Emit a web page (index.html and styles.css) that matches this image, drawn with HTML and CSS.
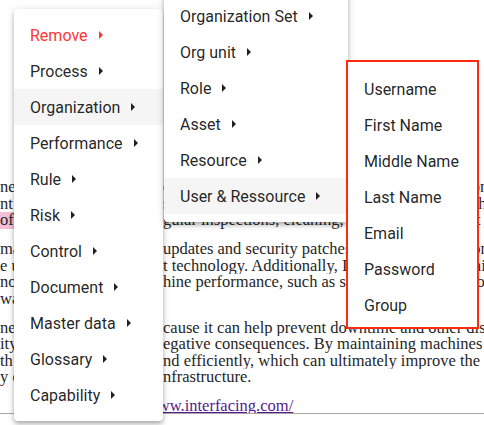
FILE: index.html
```html
<!DOCTYPE html>
<html lang="en">
<head>
<meta charset="utf-8">
<title>Context menu</title>
<link rel="stylesheet" href="styles.css">
</head>
<body>
<div class="page">
  <div class="doc">
    <p class="para">
      <span class="ln"><span class="l">ne</span><span class="r">ed to be maintained regularly in order to function properly and to avoid any failure that ma</span></span>
      <span class="ln"><span class="l">nt :</span><span class="r">ssential, and it involves a number of tasks that should be carried out periodically and</span></span>
      <span class="ln"><span class="l"><span class="mark">of</span></span><span class="r">gular inspections, cleaning, and the replacement of worn parts and components to o</span></span>
    </p>
    <p class="para">
      <span class="ln"><span class="l">may</span><span class="r">updates and security patches are installed as soon as they are released by vendor y</span></span>
      <span class="ln"><span class="l">e u</span><span class="r">t technology. Additionally, IT teams should monitor the systems and verify r</span></span>
      <span class="ln"><span class="l">no</span><span class="r">hine performance, such as slow response times or errors, to detect any problems</span></span>
      <span class="ln"><span class="l">wa</span><span class="r"></span></span>
    </p>
    <p class="para">
      <span class="ln"><span class="l">ne</span><span class="r">cause it can help prevent downtime and other disruptions</span></span>
      <span class="ln"><span class="l">ity</span><span class="r">egative consequences. By maintaining machines regularly</span></span>
      <span class="ln"><span class="l">th</span><span class="r">nd efficiently, which can ultimately improve the overall</span></span>
      <span class="ln"><span class="l">y c</span><span class="r">nfrastructure.</span></span>
    </p>
    <p class="para">
      <span class="ln"><span class="l"></span><span class="r r-open"><a class="link" href="#">https://www.interfacing.com/</a></span></span>
    </p>
  </div>

  <div class="menu menu-main">
    <div class="item item-danger">Remove<svg class="arr" width="4" height="8" viewBox="0 0 4 8"><path d="M0 0L4 4L0 8Z"/></svg></div>
    <div class="item">Process<svg class="arr" width="4" height="8" viewBox="0 0 4 8"><path d="M0 0L4 4L0 8Z"/></svg></div>
    <div class="item item-active">Organization<svg class="arr" width="4" height="8" viewBox="0 0 4 8"><path d="M0 0L4 4L0 8Z"/></svg></div>
    <div class="item">Performance<svg class="arr" width="4" height="8" viewBox="0 0 4 8"><path d="M0 0L4 4L0 8Z"/></svg></div>
    <div class="item">Rule<svg class="arr" width="4" height="8" viewBox="0 0 4 8"><path d="M0 0L4 4L0 8Z"/></svg></div>
    <div class="item">Risk<svg class="arr" width="4" height="8" viewBox="0 0 4 8"><path d="M0 0L4 4L0 8Z"/></svg></div>
    <div class="item">Control<svg class="arr" width="4" height="8" viewBox="0 0 4 8"><path d="M0 0L4 4L0 8Z"/></svg></div>
    <div class="item">Document<svg class="arr" width="4" height="8" viewBox="0 0 4 8"><path d="M0 0L4 4L0 8Z"/></svg></div>
    <div class="item">Master data<svg class="arr" width="4" height="8" viewBox="0 0 4 8"><path d="M0 0L4 4L0 8Z"/></svg></div>
    <div class="item">Glossary<svg class="arr" width="4" height="8" viewBox="0 0 4 8"><path d="M0 0L4 4L0 8Z"/></svg></div>
    <div class="item">Capability<svg class="arr" width="4" height="8" viewBox="0 0 4 8"><path d="M0 0L4 4L0 8Z"/></svg></div>
  </div>

  <div class="menu menu-sub">
    <div class="item">Organization Set<svg class="arr" width="4" height="8" viewBox="0 0 4 8"><path d="M0 0L4 4L0 8Z"/></svg></div>
    <div class="item">Org unit<svg class="arr" width="4" height="8" viewBox="0 0 4 8"><path d="M0 0L4 4L0 8Z"/></svg></div>
    <div class="item">Role<svg class="arr" width="4" height="8" viewBox="0 0 4 8"><path d="M0 0L4 4L0 8Z"/></svg></div>
    <div class="item">Asset<svg class="arr" width="4" height="8" viewBox="0 0 4 8"><path d="M0 0L4 4L0 8Z"/></svg></div>
    <div class="item">Resource<svg class="arr" width="4" height="8" viewBox="0 0 4 8"><path d="M0 0L4 4L0 8Z"/></svg></div>
    <div class="item item-active">User &amp; Ressource<svg class="arr" width="4" height="8" viewBox="0 0 4 8"><path d="M0 0L4 4L0 8Z"/></svg></div>
  </div>

  <div class="menu-fields">
    <div class="item">Username</div>
    <div class="item">First Name</div>
    <div class="item">Middle Name</div>
    <div class="item">Last Name</div>
    <div class="item">Email</div>
    <div class="item">Password</div>
    <div class="item">Group</div>
  </div>
</div>
</body>
</html>
```

FILE: styles.css
```css
html, body {
  margin: 0;
  padding: 0;
  background: #ffffff;
}

.page {
  position: relative;
  width: 484px;
  height: 425px;
  overflow: hidden;
  background: #ffffff;
}

/* background document */
.doc {
  height: 234px;
  padding-top: 179px;
  border-bottom: 1px solid #a8a8a8;
  overflow: hidden;
  font-family: "Liberation Serif", "Times New Roman", serif;
  font-size: 16.5px;
  line-height: 16.5px;
  color: #262626;
}

.para {
  margin: 0 0 12.5px 0;
}

.ln {
  display: grid;
  grid-template-columns: 163px minmax(0, 1fr);
  white-space: nowrap;
}

.l, .r {
  overflow: hidden;
}

.r-open {
  overflow: visible;
}

.mark {
  background: #f2c0d8;
}

.link {
  color: #551a8b;
  margin-left: -63px;
}

/* menus */
.menu {
  position: absolute;
  background: #ffffff;
  border-radius: 4px;
  padding: 8px 0;
  box-shadow: 0 2px 4px -1px rgba(0, 0, 0, 0.2),
              0 4px 5px 0 rgba(0, 0, 0, 0.14),
              0 1px 10px 0 rgba(0, 0, 0, 0.12);
  font-family: Roboto, "Noto Sans", sans-serif;
}

.menu-main {
  left: 14px;
  top: 9px;
  width: 149px;
}

.menu-sub {
  left: 164px;
  top: -10px;
  width: 184px;
}

.menu-fields {
  position: absolute;
  left: 346px;
  top: 60px;
  width: 129px;
  background: #ffffff;
  border: 2px solid #ff2a10;
  padding: 9px 0 4px 0;
  font-family: Roboto, "Noto Sans", sans-serif;
}

.item {
  display: flex;
  align-items: center;
  height: 36px;
  padding: 0 16px;
  font-size: 16px;
  color: rgba(0, 0, 0, 0.87);
  white-space: nowrap;
}

.item-active {
  background: #f5f5f5;
}

.item-danger {
  color: #ff3535;
}

.arr {
  margin-left: 11px;
  fill: currentColor;
  flex: none;
}
```
